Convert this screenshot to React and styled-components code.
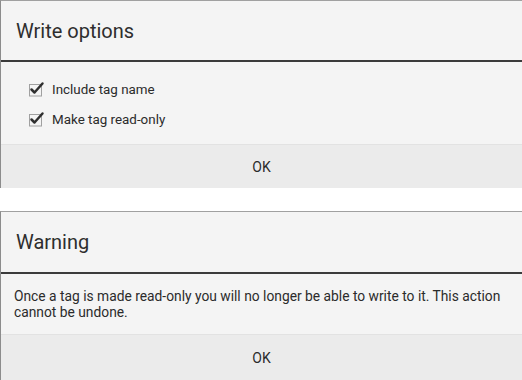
import React from "react";
import styled, { createGlobalStyle } from "styled-components";

const GlobalStyle = createGlobalStyle`
  html, body {
    margin: 0;
    padding: 0;
    background: #ffffff;
    font-family: Roboto, "Noto Sans", sans-serif;
  }
`;

const Page = styled.div`
  display: flex;
  flex-direction: column;
  gap: 23px;
  width: 522px;
`;

const Dialog = styled.div`
  display: flex;
  flex-direction: column;
  background: #f4f4f4;
  border-left: 1px solid #8c8c8c;
  border-top: 1px solid #a0a0a0;
`;

const Header = styled.div`
  height: ${(props) => props.height || 59}px;
  display: flex;
  align-items: center;
  padding-left: 15px;
  font-size: 20px;
  color: #2e2e2e;
`;

const Divider = styled.div`
  height: 2px;
  background: #3b3b3b;
`;

const Body = styled.div`
  display: flex;
  flex-direction: column;
  padding: ${(props) => props.padding || "12px 0 10px 27px"};
`;

const CheckRow = styled.label`
  display: flex;
  align-items: center;
  height: 30px;
  gap: 7px;
  font-size: 13.4px;
  color: #2b2b2b;
`;

const Message = styled.p`
  margin: 0;
  padding-right: 20px;
  font-size: 13.8px;
  line-height: 16px;
  color: #2b2b2b;
`;

const Footer = styled.div`
  height: ${(props) => props.height || 44}px;
  display: flex;
  align-items: center;
  justify-content: center;
  background: #ebebeb;
  border-top: 1px solid #e2e2e2;
  box-sizing: border-box;
  font-size: 14px;
  color: #2b2b2b;
`;

const CheckIcon = () => (
  <svg width="17" height="16" viewBox="0 0 17 16">
    <rect x="1.5" y="3.5" width="12" height="11.5" fill="none" stroke="#a0a0a0" strokeWidth="1" />
    <path d="M3.5 8.5 L6.5 11.5 L14.5 2.5" fill="none" stroke="#2f2f2f" strokeWidth="2.5" strokeLinecap="round" strokeLinejoin="round" />
  </svg>
);

const Option = ({ children }) => (
  <CheckRow>
    <CheckIcon />
    {children}
  </CheckRow>
);

export default function App() {
  return (
    <>
      <GlobalStyle />
      <Page>
        <Dialog>
          <Header>Write options</Header>
          <Divider />
          <Body>
            <Option>Include tag name</Option>
            <Option>Make tag read-only</Option>
          </Body>
          <Footer>OK</Footer>
        </Dialog>
        <Dialog>
          <Header height={60}>Warning</Header>
          <Divider />
          <Body padding="14px 0 14px 13px">
            <Message>
              Once a tag is made read-only you will no longer be able to write to it. This action
              cannot be undone.
            </Message>
          </Body>
          <Footer height={46}>OK</Footer>
        </Dialog>
      </Page>
    </>
  );
}
